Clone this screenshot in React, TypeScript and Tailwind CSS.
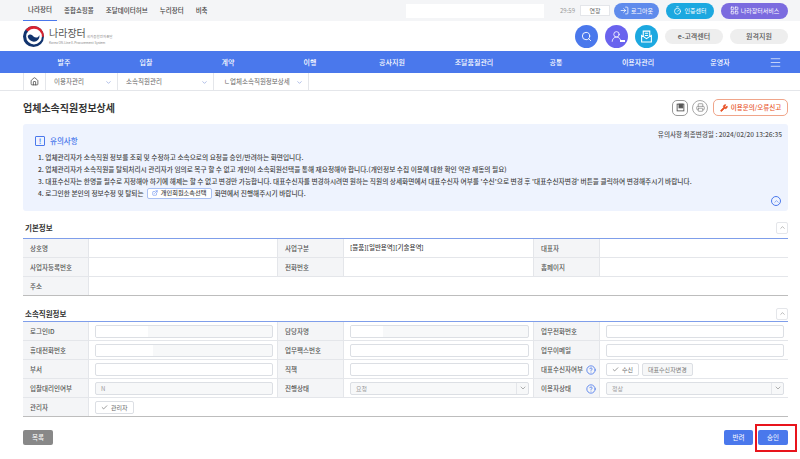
import React from 'react';
import { ChevronDown, ChevronUp, Check, Menu, Search, Printer, Wrench, ExternalLink, LogIn, Timer, LayoutGrid, Home, UserRound, CircleHelp } from 'lucide-react';

const topTabs = ['나라장터', '종합쇼핑몰', '조달데이터허브', '누리장터', '비축'];
const navItems = ['발주', '입찰', '계약', '이행', '공사지원', '조달품질관리', '공통', '이용자관리', '운영자'];

function Logo() {
  return (
    <svg width="21" height="21" viewBox="0 0 40 40" className="shrink-0">
      <circle cx="20" cy="20" r="20" fill="#12346e" />
      <path d="M5 7 A20 20 0 0 1 40 20 L36 21 C34 11 22 4 10 11 Z" fill="#d8232f" />
      <circle cx="21" cy="20" r="15" fill="#fff" />
      <path d="M9 19 C13 14 17 16 20 20 C24 24 30 22 31 17 C33 26 24 32 17 29 C12 27 9 23 9 19Z" fill="#12346e" />
    </svg>
  );
}

function MailIcon() {
  return (
    <svg width="13" height="13" viewBox="0 0 24 24" fill="none" stroke="currentColor" strokeWidth="2">
      <path d="M3 10 L12 16 L21 10 V22 H3 Z" />
      <path d="M6 12 V2 H18 V12" />
      <path d="M9 6 H15 M9 10 H15" />
    </svg>
  );
}

function UserIcon() {
  return (
    <span className="relative flex">
      <UserRound size={13} strokeWidth={1.5} />
      <span className="absolute right-[-2px] bottom-[1px] w-[5px] h-[2px] bg-white" />
    </span>
  );
}

function Label({ children, help, edge }: { children: React.ReactNode; help?: boolean; edge?: boolean }) {
  return (
    <div className={`bg-[#f4f5f7] border-r border-[#e4e6ea] ${edge ? '' : 'border-l'} flex items-center justify-between pt-px pl-[7px] pr-[3px] text-[6.5px] font-medium text-[#555]`}>
      <span>{children}</span>
      {help && <CircleHelp size={10} className="text-[#4a78ec]" />}
    </div>
  );
}

function Cell({ children, span, className = '' }: { children?: React.ReactNode; span?: boolean; className?: string }) {
  return <div className={`bg-white flex items-center pl-[6px] pr-[4px] gap-[3px] min-w-0 text-[6.5px] ${span ? 'col-span-5' : ''} ${className}`}>{children}</div>;
}

function Input({ patch, ro, select, value }: { patch?: string; ro?: boolean; select?: boolean; value?: string }) {
  return (
    <div className={`relative w-full h-[13px] border border-[#dcdfe4] rounded-[2px] flex items-center pl-[5px] text-[6px] text-[#999] overflow-hidden ${ro ? 'bg-[#f7f8f9]' : 'bg-white'}`}>
      {patch && <div className={`absolute left-0 inset-y-0 bg-white ${patch}`} />}
      {value}
      {select && (
        <span className="absolute right-0 inset-y-0 w-[12px] border-l border-[#e4e6ea] flex items-center justify-center">
          <ChevronDown size={8} className="text-[#888]" />
        </span>
      )}
    </div>
  );
}

function CheckBtn({ text }: { text: string }) {
  return (
    <span className="h-[13px] px-[5px] border border-[#dcdfe4] rounded-[2px] bg-white flex items-center gap-[3px] text-[6px] text-[#666] shrink-0">
      <Check size={7} className="text-[#555]" />
      {text}
    </span>
  );
}

function SectionHead({ title }: { title: string }) {
  return (
    <div className="flex items-center justify-between h-[13px] pl-[2px]">
      <span className="text-[7.5px] font-bold text-[#333]">{title}</span>
      <span className="w-[12px] h-[12px] border border-[#e4e6ea] rounded-[2px] flex items-center justify-center">
        <ChevronUp size={7} className="text-[#888]" />
      </span>
    </div>
  );
}

const tableCols = 'grid grid-cols-[66px_188px_67px_189px_67px_1fr] auto-rows-[18px] gap-y-px bg-[#e4e6ea] border-t-[1.5px] border-[#7f9eea] border-b border-b-[#bdbdbd]';

export default function App() {
  return (
    <div className="relative w-[800px] h-[459px] overflow-hidden bg-white text-[#333]" style={{ fontFamily: '"Noto Sans CJK KR", "Noto Sans", sans-serif' }}>
      {/* 상단 탭 */}
      <div className="h-[21px] bg-[#f4f5f7] flex items-center pl-[23px] pr-[12px]">
        <div className="flex gap-[2px] text-[6.5px] font-medium text-[#444] h-full">
          {topTabs.map((t, i) => (
            <span key={t} className={`flex items-center px-[5px] ${i === 0 ? 'border-b border-[#4a78ec]' : ''}`}>{t}</span>
          ))}
        </div>
        <div className="ml-auto w-[138px] h-[14px] bg-white" />
        <span className="ml-[16px] text-[6px] text-[#999]">29:59</span>
        <span className="ml-[5px] w-[30px] h-[11px] bg-white border border-[#e4e6ea] flex items-center justify-center text-[6px] text-[#666]">연장</span>
        <span className="ml-[4px] w-[45px] h-[16px] rounded-full bg-[#5f8bec] text-white text-[6px] flex items-center justify-center gap-[2px]"><LogIn size={9} />로그아웃</span>
        <span className="ml-[7px] w-[48px] h-[16px] rounded-full bg-[#1ca8e0] text-white text-[6px] flex items-center justify-center gap-[2px]"><Timer size={9} />인증센터</span>
        <span className="ml-[7px] w-[67px] h-[16px] rounded-full bg-[#7b6bdf] text-white text-[6px] flex items-center justify-center gap-[2px]"><LayoutGrid size={9} />나라장터서비스</span>
      </div>

      {/* 로고 영역 */}
      <div className="h-[30px] flex items-center pl-[23px] pr-[12px]">
        <Logo />
        <div className="ml-[5px] flex flex-col">
          <div className="flex items-end gap-[1px] h-[12px]">
            <span className="text-[10px] text-[#555] leading-[12px]">나라장터</span>
            <span className="text-[3.5px] text-[#888] leading-[5px]">국가종합전자조달</span>
          </div>
          <span className="text-[3.2px] text-[#888] leading-[5px] mt-[1px] whitespace-nowrap">Korea ON-Line E-Procurement System</span>
        </div>
        <div className="ml-auto flex items-center">
          <span className="w-[23px] h-[23px] rounded-full bg-[#4a78ec] flex items-center justify-center text-white"><Search size={11} /></span>
          <span className="ml-[7px] w-[23px] h-[23px] rounded-full bg-[#6a63ee] flex items-center justify-center text-white"><UserIcon /></span>
          <span className="ml-[7px] w-[23px] h-[23px] rounded-full bg-[#1ca8e0] flex items-center justify-center text-white"><MailIcon /></span>
          <span className="ml-[7px] w-[58px] h-[15px] rounded-full bg-[#eeeeee] flex items-center justify-center text-[7px] font-medium text-[#555]">e-고객센터</span>
          <span className="ml-[7px] w-[58px] h-[15px] rounded-full bg-[#eeeeee] flex items-center justify-center text-[7px] font-medium text-[#555]">원격지원</span>
        </div>
      </div>

      {/* 메인 메뉴 */}
      <div className="h-[22px] bg-[#4a78ec] pl-[23px] flex items-center text-white text-[7px] font-medium">
        {navItems.map((n) => (
          <span key={n} className="w-[82px] shrink-0 text-center whitespace-nowrap">{n}</span>
        ))}
        <Menu size={13} className="ml-[8px] text-[#dfe7fb]" strokeWidth={1.5} />
      </div>

      {/* 경로 */}
      <div className="h-[18px] border-b border-[#e4e6ea] pl-[23px] flex text-[6.5px] text-[#666]">
        <span className="w-[23px] border-x border-[#e4e6ea] flex items-center justify-center"><Home size={9} className="text-[#444]" /></span>
        <span className="w-[72px] border-r border-[#e4e6ea] flex items-center justify-between pt-px pl-[8px] pr-[5px]">이용자관리<ChevronDown size={7} className="text-[#7a93d8]" /></span>
        <span className="w-[96px] border-r border-[#e4e6ea] flex items-center justify-between pt-px pl-[8px] pr-[5px]">소속직원관리<ChevronDown size={7} className="text-[#7a93d8]" /></span>
        <span className="w-[95px] border-r border-[#e4e6ea] flex items-center justify-between pt-px pl-[10px] pr-[5px] whitespace-nowrap">ㄴ업체소속직원정보상세<ChevronDown size={7} className="text-[#7a93d8]" /></span>
      </div>

      <div className="pl-[23px] pr-[12px]">
        {/* 제목 */}
        <div className="h-[33px] flex items-center">
          <h1 className="text-[10px] font-bold text-[#333]">업체소속직원정보상세</h1>
          <div className="ml-auto flex items-center gap-[4px]">
            <span className="w-[16px] h-[16px] rounded-[5px] border border-[#999] flex items-center justify-center">
              <svg width="9" height="9" viewBox="0 0 12 12" fill="none" stroke="#555" strokeWidth="1.2"><rect x="1.5" y="1.5" width="9" height="9" /><rect x="4" y="1.5" width="5" height="5" fill="#555" /></svg>
            </span>
            <span className="w-[16px] h-[16px] rounded-full border border-[#aaa] flex items-center justify-center"><Printer size={9} className="text-[#888]" /></span>
            <span className="ml-px w-[75px] h-[17px] rounded-[5px] border border-[#f0a58a] flex items-center justify-center gap-[3px] text-[6.5px] font-medium text-[#e8542a]"><Wrench size={8} fill="currentColor" />이용문의/오류신고</span>
          </div>
        </div>

        {/* 유의사항 */}
        <div className="h-[87px] bg-[#eef3fe] rounded-[3px] relative pt-[11px] pl-[12px] pr-[6px]">
          <div className="flex items-center gap-[5px] h-[12px]">
            <span className="w-[10px] h-[10px] border border-[#4a78ec] rounded-[1px] flex items-center justify-center text-[7px] font-bold text-[#4a78ec] leading-none">!</span>
            <span className="text-[7.5px] text-[#4a78ec] font-medium">유의사항</span>
          </div>
          <ol className="mt-[4px] pl-[3px] text-[6.7px] font-medium text-[#444] whitespace-nowrap">
            <li className="h-[12px] leading-[12px]">1. 업체관리자가 소속직원 정보를 조회 및 수정하고 소속으로의 요청을 승인/반려하는 화면입니다.</li>
            <li className="h-[12px] leading-[12px]">2. 업체관리자가 소속직원을 탈퇴처리시 관리자가 임의로 복구 할 수 없고 개인이 소속회원선택을 통해 재요청해야 합니다.(개인정보 수집 이용에 대한 확인 약관 재동의 필요)</li>
            <li className="h-[12px] leading-[12px]">3. 대표수신자는 한명을 필수로 지정해야 하기에 해제는 할 수 없고 변경만 가능합니다. 대표수신자를 변경하시려면 원하는 직원의 상세화면에서 대표수신자 여부를 '수신'으로 변경 후 '대표수신자변경' 버튼을 클릭하여 변경해주시기 바랍니다.</li>
            <li className="h-[12px] flex items-center gap-[3px]">4. 로그인한 본인의 정보수정 및 탈퇴는
              <span className="h-[11px] w-[65px] bg-white border border-[#a9c0f3] rounded-[2px] flex items-center justify-center gap-[3px] text-[6.2px]"><ExternalLink size={6} className="text-[#4a78ec]" />개인회원소속선택</span>
              화면에서 진행해주시기 바랍니다.
            </li>
          </ol>
          <span className="absolute top-[6px] right-[6px] text-[6.6px] font-medium text-[#555]">유의사항 최종변경일 : 2024/02/20 13:26:35</span>
          <span className="absolute bottom-[5px] right-[7px] w-[10px] h-[10px] rounded-full border border-[#4a78ec] flex items-center justify-center"><ChevronUp size={7} className="text-[#4a78ec]" /></span>
        </div>

        {/* 기본정보 */}
        <div className="mt-[10px]"><SectionHead title="기본정보" /></div>
        <div className={`mt-[4px] ${tableCols}`}>
          <Label edge>상호명</Label><Cell />
          <Label>사업구분</Label><Cell className="font-medium text-[#444]">[물품][일반용역][기술용역]</Cell>
          <Label>대표자</Label><Cell />
          <Label edge>사업자등록번호</Label><Cell />
          <Label>전화번호</Label><Cell />
          <Label>홈페이지</Label><Cell />
          <Label edge>주소</Label><Cell span />
        </div>

        {/* 소속직원정보 */}
        <div className="mt-[11px]"><SectionHead title="소속직원정보" /></div>
        <div className={`mt-[1px] ${tableCols}`}>
          <Label edge>로그인ID</Label><Cell><Input ro patch="w-[52px]" /></Cell>
          <Label>담당자명</Label><Cell><Input ro patch="w-[32px]" /></Cell>
          <Label>업무전화번호</Label><Cell><Input /></Cell>

          <Label edge>휴대전화번호</Label><Cell><Input ro patch="w-[57px]" /></Cell>
          <Label>업무팩스번호</Label><Cell><Input /></Cell>
          <Label>업무이메일</Label><Cell><Input /></Cell>

          <Label edge>부서</Label><Cell><Input /></Cell>
          <Label>직책</Label><Cell><Input /></Cell>
          <Label help>대표수신자여부</Label>
          <Cell>
            <CheckBtn text="수신" />
            <span className="h-[13px] px-[5px] border border-[#dcdfe4] rounded-[2px] bg-[#f6f7f8] flex items-center text-[6px] text-[#777] shrink-0">대표수신자변경</span>
          </Cell>

          <Label edge>입찰대리인여부</Label><Cell><Input ro value="N" /></Cell>
          <Label>진행상태</Label><Cell><Input ro select value="요청" /></Cell>
          <Label help>이용자상태</Label><Cell><Input ro select value="정상" /></Cell>

          <Label edge>관리자</Label><Cell span><CheckBtn text="관리자" /></Cell>
        </div>

        {/* 하단 버튼 */}
        <div className="mt-[13px] flex items-center">
          <span className="w-[30px] h-[15px] rounded-[2px] bg-[#888] text-white text-[6.5px] flex items-center justify-center">목록</span>
          <span className="ml-auto w-[29px] h-[15px] rounded-[2px] bg-[#4a78ec] text-white text-[6.5px] flex items-center justify-center">반려</span>
          <span className="ml-[5px] w-[30px] h-[15px] rounded-[2px] bg-[#4a78ec] text-white text-[6.5px] flex items-center justify-center">승인</span>
        </div>
      </div>

      {/* 승인 버튼 강조 표시 */}
      <div className="absolute left-[755px] top-[424px] w-[42px] h-[28px] border-2 border-[#e8141c]" />
    </div>
  );
}
